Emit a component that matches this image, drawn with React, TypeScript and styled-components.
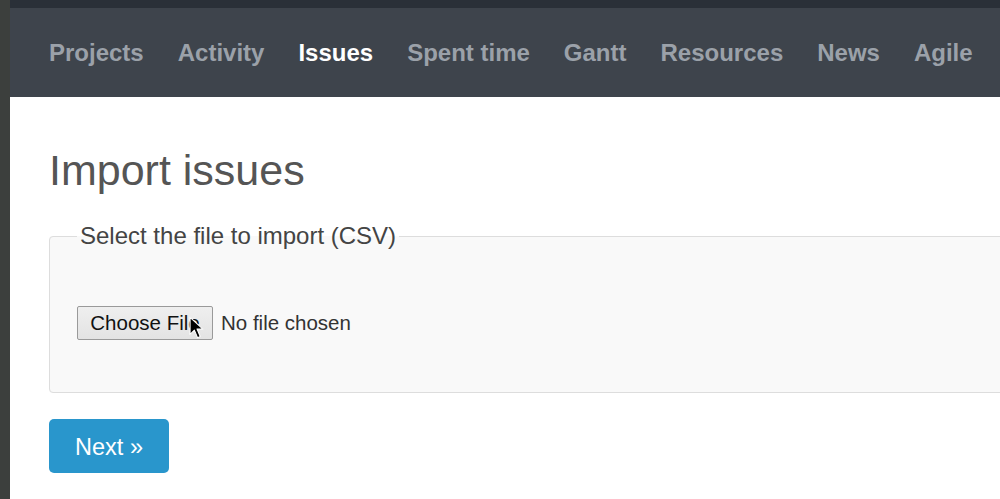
import React from "react";
import styled, { createGlobalStyle } from "styled-components";

const GlobalStyle = createGlobalStyle`
  html, body {
    margin: 0;
    padding: 0;
    background: #3c3f3d;
    overflow: hidden;
    font-family: "Liberation Sans", Arial, sans-serif;
  }
`;

const Screen = styled.div`
  display: flex;
  height: 499px;
  width: 1000px;
  overflow: hidden;
`;

const SideStrip = styled.div`
  width: 10px;
  flex-shrink: 0;
  background: #3c3f3d;
`;

const Window = styled.div`
  flex: 1;
  display: flex;
  flex-direction: column;
  min-width: 0;
  overflow: hidden;
`;

const TopStrip = styled.div`
  height: 8px;
  background: #2a3038;
`;

const NavBar = styled.nav`
  height: 89px;
  background: #3e444c;
  display: flex;
  align-items: center;
  gap: 34px;
  padding-left: 39px;
  padding-top: 1px;
  box-sizing: border-box;
  white-space: nowrap;
`;

const NavItem = styled.a<{ $active?: boolean }>`
  font-size: 24px;
  font-weight: bold;
  color: ${(p) => (p.$active ? "#ffffff" : "#9ba1a9")};
  text-decoration: none;
`;

const Content = styled.main`
  flex: 1;
  background: #ffffff;
  padding: 49px 0 0 39px;
  box-sizing: border-box;
`;

const Title = styled.h2`
  margin: 0;
  font-size: 43px;
  line-height: 48px;
  font-weight: normal;
  color: #555555;
`;

const FileBox = styled.fieldset`
  margin: 28px 0 0 0;
  width: 1100px;
  padding: 56px 0 52px 27px;
  background: #f9f9f9;
  border: 1px solid #dddddd;
  border-radius: 4px;
  box-sizing: border-box;
`;

const Legend = styled.legend`
  font-size: 24px;
  line-height: 28px;
  color: #444444;
  padding: 0 3px;
`;

const FileRow = styled.div`
  display: flex;
  align-items: center;
  gap: 8px;
  position: relative;
`;

const ChooseButton = styled.span`
  display: inline-flex;
  align-items: center;
  justify-content: center;
  width: 136px;
  height: 34px;
  box-sizing: border-box;
  font-size: 20.5px;
  color: #111111;
  background: linear-gradient(#efefef, #e3e3e3);
  border: 1px solid #9a9a9a;
  border-radius: 2px;
`;

const NoFile = styled.span`
  font-size: 20.5px;
  color: #333333;
`;

const Pointer = styled.svg`
  position: absolute;
  left: 112px;
  top: 10px;
`;

const NextButton = styled.button`
  margin-top: 26px;
  width: 120px;
  height: 54px;
  background: #2996cc;
  color: #ffffff;
  border: none;
  border-radius: 5px;
  font-family: "Liberation Sans", Arial, sans-serif;
  font-size: 23.5px;
  padding: 2px 0 0;
`;

const navItems = ["Projects", "Activity", "Issues", "Spent time", "Gantt", "Resources", "News", "Agile"];

export default function App() {
  return (
    <>
      <GlobalStyle />
      <Screen>
        <SideStrip />
        <Window>
          <TopStrip />
          <NavBar>
            {navItems.map((item) => (
              <NavItem key={item} $active={item === "Issues"}>
                {item}
              </NavItem>
            ))}
          </NavBar>
          <Content>
            <Title>Import issues</Title>
            <FileBox>
              <Legend>Select the file to import (CSV)</Legend>
              <FileRow>
                <ChooseButton>Choose File</ChooseButton>
                <NoFile>No file chosen</NoFile>
                <Pointer width="15" height="24" viewBox="0 0 14 22">
                  <path
                    d="M1 1 L1 17 L5 13 L8 20 L10.5 19 L7.5 12 L13 12 Z"
                    fill="#000"
                    stroke="#fff"
                    strokeWidth="1"
                    strokeLinejoin="round"
                  />
                </Pointer>
              </FileRow>
            </FileBox>
            <NextButton>Next »</NextButton>
          </Content>
        </Window>
      </Screen>
    </>
  );
}
